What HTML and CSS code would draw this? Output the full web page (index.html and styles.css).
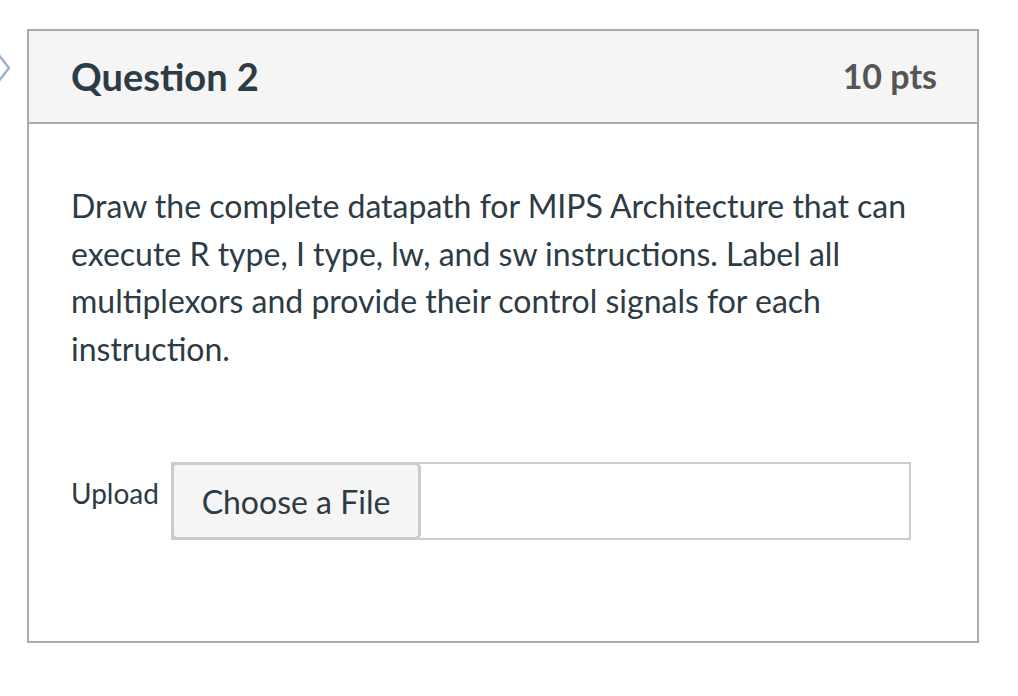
FILE: index.html
```html
<!DOCTYPE html>
<html lang="en">
<head>
    <meta charset="UTF-8">
    <title>Question 2</title>
    <link rel="stylesheet" href="styles.css">
</head>
<body>
    <div class="nav-arrow">
        <svg width="14" height="34" viewBox="0 0 14 34">
            <polyline points="-2,3 9,17 -2,31" fill="none" stroke="#9fb3c8" stroke-width="2.5"/>
        </svg>
    </div>
    <div class="question">
        <div class="question-header">
            <h2 class="question-title">Question 2</h2>
            <span class="question-points">10 pts</span>
        </div>
        <div class="question-body">
            <p class="question-text">Draw the complete datapath for MIPS Architecture that can execute R type, I type, lw, and sw instructions. Label all multiplexors and provide their control signals for each instruction.</p>
            <div class="upload-row">
                <label class="upload-label">Upload</label>
                <div class="file-input">
                    <button class="file-button">Choose a File</button>
                    <div class="file-name"></div>
                </div>
            </div>
        </div>
    </div>
</body>
</html>
```

FILE: styles.css
```css
body {
    font-family: Lato, "Open Sans", sans-serif;
    margin: 0;
    padding: 29px 0 0 27px;
    background-color: #fff;
    color: #2d3b45;
    position: relative;
}

.nav-arrow {
    position: absolute;
    left: 0;
    top: 51px;
}

.question {
    width: 952px;
    height: 614px;
    box-sizing: border-box;
    border: 2px solid #ababab;
    display: flex;
    flex-direction: column;
}

.question-header {
    height: 93px;
    box-sizing: border-box;
    background-color: #f5f5f5;
    border-bottom: 2px solid #ababab;
    display: flex;
    align-items: center;
    justify-content: space-between;
    padding: 0 40px 2px 42px;
}

.question-title {
    margin: 0;
    font-size: 38px;
    font-weight: bold;
    color: #2d3b45;
}

.question-points {
    font-size: 34px;
    font-weight: bold;
    color: #555;
}

.question-body {
    padding: 58px 44px 0 42px;
}

.question-text {
    margin: 0;
    font-size: 32px;
    line-height: 47.5px;
}

.upload-row {
    display: flex;
    align-items: flex-start;
    margin-top: 90px;
}

.upload-label {
    font-size: 28px;
    margin-top: 14px;
    width: 100px;
}

.file-input {
    display: flex;
    width: 740px;
    height: 78px;
    box-sizing: border-box;
    border: 2px solid #c7cdd1;
}

.file-button {
    width: 250px;
    height: 78px;
    margin: -2px 0 0 -2px;
    box-sizing: border-box;
    background-color: #f5f5f5;
    border: 3px solid #c7cdd1;
    border-radius: 6px;
    font-family: Lato, sans-serif;
    font-size: 32px;
    color: #2d3b45;
    padding: 0;
}
```
